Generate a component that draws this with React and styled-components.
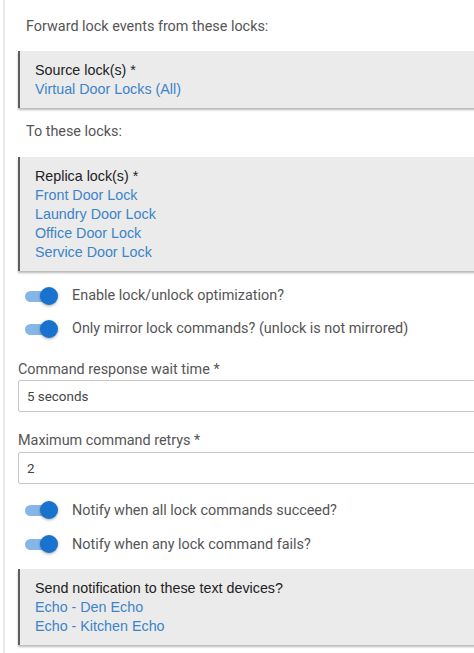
import React from "react";
import styled, { createGlobalStyle } from "styled-components";

const Global = createGlobalStyle`
  html, body { margin: 0; padding: 0; background: #fff; overflow: hidden; }
  body { font-family: Roboto, "Liberation Sans", Arial, sans-serif; }
  #root { width: 474px; overflow: hidden; }
`;

const Page = styled.div`
  margin-left: 3px;
  border-left: 2px solid #e9e9e9;
  min-height: 653px;
  padding-left: 13px;
  padding-top: 17px;
  box-sizing: border-box;
`;

const Note = styled.div`
  font-family: Roboto, sans-serif;
  font-size: 14.4px;
  line-height: 20px;
  color: #555;
  padding-left: 8px;
  margin-top: ${(p) => p.$mt || 0}px;
`;

const Box = styled.div`
  margin-top: ${(p) => p.$mt || 0}px;
  margin-right: -20px;
  background: #ebebeb;
  border-left: 2px solid #5e5e5e;
  padding: 10px 15px 9px;
  box-shadow: 0 2px 2px rgba(0, 0, 0, 0.28);
  font-family: "Liberation Sans", Arial, sans-serif;
  font-size: 14.3px;
  line-height: 19px;
`;

const BoxTitle = styled.div`
  color: #222;
`;

const BoxLink = styled.div`
  color: #3b84c9;
`;

const Row = styled.div`
  display: flex;
  align-items: center;
  height: ${(p) => p.$h || 33}px;
  margin-top: ${(p) => p.$mt || 0}px;
  padding-left: 7px;
  gap: 14px;
`;

const Switch = styled.span`
  position: relative;
  display: inline-block;
  width: 33px;
  height: 18px;
  flex: none;
`;

const Track = styled.span`
  position: absolute;
  left: 0;
  top: 4px;
  width: 30px;
  height: 11px;
  border-radius: 6px;
  background: #86b6e8;
`;

const Thumb = styled.span`
  position: absolute;
  right: 0;
  top: 0;
  width: 18px;
  height: 18px;
  border-radius: 50%;
  background: #1a72cf;
  box-shadow: 0 1px 3px rgba(0, 0, 0, 0.35);
`;

const RowLabel = styled.span`
  font-family: Roboto, sans-serif;
  font-size: 14.4px;
  color: #555;
`;

const FieldLabel = styled.div`
  font-family: Roboto, sans-serif;
  font-size: 14.4px;
  line-height: 20px;
  color: #555;
  margin-top: ${(p) => p.$mt || 0}px;
`;

const Input = styled.div`
  margin-top: ${(p) => p.$mt || 0}px;
  margin-right: -20px;
  height: 32px;
  box-sizing: border-box;
  border: 1px solid #c9c9c9;
  border-radius: 2px;
  padding: 0 8px;
  display: flex;
  align-items: center;
  font-family: Roboto, sans-serif;
  font-size: 13.4px;
  color: #444;
`;

function Toggle({ label }) {
  return (
    <>
      <Switch>
        <Track />
        <Thumb />
      </Switch>
      <RowLabel>{label}</RowLabel>
    </>
  );
}

export default function App() {
  return (
    <>
      <Global />
      <Page>
        <Note>Forward lock events from these locks:</Note>
        <Box $mt={14}>
          <BoxTitle>Source lock(s) *</BoxTitle>
          <BoxLink>Virtual Door Locks (All)</BoxLink>
        </Box>
        <Note $mt={14}>To these locks:</Note>
        <Box $mt={15}>
          <BoxTitle>Replica lock(s) *</BoxTitle>
          <BoxLink>Front Door Lock</BoxLink>
          <BoxLink>Laundry Door Lock</BoxLink>
          <BoxLink>Office Door Lock</BoxLink>
          <BoxLink>Service Door Lock</BoxLink>
        </Box>
        <Row $mt={8}>
          <Toggle label="Enable lock/unlock optimization?" />
        </Row>
        <Row>
          <Toggle label="Only mirror lock commands? (unlock is not mirrored)" />
        </Row>
        <FieldLabel $mt={15}>Command response wait time *</FieldLabel>
        <Input $mt={0}>5 seconds</Input>
        <FieldLabel $mt={19}>Maximum command retrys *</FieldLabel>
        <Input $mt={1}>2</Input>
        <Row $mt={9} $h={34}>
          <Toggle label="Notify when all lock commands succeed?" />
        </Row>
        <Row $h={34}>
          <Toggle label="Notify when any lock command fails?" />
        </Row>
        <Box $mt={8}>
          <BoxTitle>Send notification to these text devices?</BoxTitle>
          <BoxLink>Echo - Den Echo</BoxLink>
          <BoxLink>Echo - Kitchen Echo</BoxLink>
        </Box>
      </Page>
    </>
  );
}
